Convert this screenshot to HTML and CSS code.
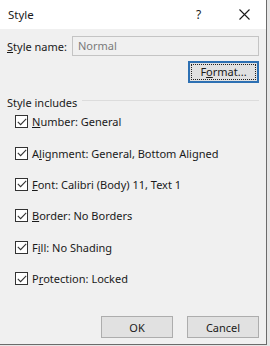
FILE: index.html
```html
<!doctype html>
<html lang="en">
<head>
    <meta charset="UTF-8">
    <title>Style</title>
    <link rel="stylesheet" href="styles.css">
</head>
<body>
<div class="dialog">
    <div class="titlebar">
        <span class="title">Style</span>
        <span class="help">?</span>
        <span class="close">
            <svg width="11" height="11" viewBox="0 0 11 11"><path d="M0.5 0.5 L10.5 10.5 M10.5 0.5 L0.5 10.5" stroke="#1a1a1a" stroke-width="1.1" fill="none"/></svg>
        </span>
    </div>

    <div class="content">
        <div class="name_row">
            <span class="label"><u>S</u>tyle name:</span>
            <div class="name_input">Normal</div>
        </div>

        <div class="format_row">
            <button class="btn btn_focus"><span class="focus_rect">F<u>o</u>rmat...</span></button>
        </div>

        <div class="group_head">
            <span>Style includes</span>
            <span class="group_line"></span>
        </div>

        <ul class="checks">
            <li><span class="box"><svg width="10" height="8" viewBox="0 0 10 8"><path d="M0.8 3.8 L3.6 6.6 L9.2 0.8" stroke="#333" stroke-width="1.1" fill="none"/></svg></span><u>N</u>umber: General</li>
            <li><span class="box"><svg width="10" height="8" viewBox="0 0 10 8"><path d="M0.8 3.8 L3.6 6.6 L9.2 0.8" stroke="#333" stroke-width="1.1" fill="none"/></svg></span>A<u>l</u>ignment: General, Bottom Aligned</li>
            <li><span class="box"><svg width="10" height="8" viewBox="0 0 10 8"><path d="M0.8 3.8 L3.6 6.6 L9.2 0.8" stroke="#333" stroke-width="1.1" fill="none"/></svg></span><u>F</u>ont: Calibri (Body) 11, Text 1</li>
            <li><span class="box"><svg width="10" height="8" viewBox="0 0 10 8"><path d="M0.8 3.8 L3.6 6.6 L9.2 0.8" stroke="#333" stroke-width="1.1" fill="none"/></svg></span><u>B</u>order: No Borders</li>
            <li><span class="box"><svg width="10" height="8" viewBox="0 0 10 8"><path d="M0.8 3.8 L3.6 6.6 L9.2 0.8" stroke="#333" stroke-width="1.1" fill="none"/></svg></span>F<u>i</u>ll: No Shading</li>
            <li><span class="box"><svg width="10" height="8" viewBox="0 0 10 8"><path d="M0.8 3.8 L3.6 6.6 L9.2 0.8" stroke="#333" stroke-width="1.1" fill="none"/></svg></span>P<u>r</u>otection: Locked</li>
        </ul>

        <div class="buttons">
            <button class="btn">OK</button>
            <button class="btn">Cancel</button>
        </div>
    </div>
</div>
</body>
</html>
```

FILE: styles.css
```css
body {
    margin: 0;
    background-color: #e6e6e6;
    font-family: "Noto Sans", "Open Sans", sans-serif;
    font-size: 11px;
    color: #1a1a1a;
}

.dialog {
    width: 266px;
    height: 344px;
    background-color: #f0f0f0;
    border-right: 1px solid #6b6b6b;
    border-bottom: 1px solid #6b6b6b;
    display: flex;
    flex-direction: column;
}

.titlebar {
    height: 29px;
    background-color: #fff;
    display: flex;
    align-items: center;
    padding-left: 8px;
}

.title {
    flex: 1;
    font-size: 11.5px;
}

.help {
    width: 43px;
    padding-left: 3px;
    font-size: 12px;
}

.close {
    width: 27px;
    display: flex;
    align-items: center;
}

.content {
    padding: 7px 7px 0 7px;
    display: flex;
    flex-direction: column;
}

.name_row {
    display: flex;
    align-items: center;
    height: 20px;
}

.label {
    width: 65px;
}

.name_input {
    flex: 1;
    height: 18px;
    line-height: 18px;
    border: 1px solid #c4c4c4;
    background-color: #f0f0f0;
    color: #7a7a7a;
    padding-left: 5px;
}

.format_row {
    display: flex;
    justify-content: flex-end;
    margin-top: 5px;
}

.btn {
    font-family: inherit;
    font-size: 11px;
    color: #1a1a1a;
    background-color: #e1e1e1;
    border: 1px solid #adadad;
    width: 72px;
    height: 22px;
    padding: 0;
}

.btn_focus {
    border: 2px solid #2d70b3;
    width: 71px;
    height: 22px;
    padding: 1px;
}

.focus_rect {
    display: block;
    height: 100%;
    box-sizing: border-box;
    border: 1px dotted #222;
    line-height: 14px;
}

.group_head {
    display: flex;
    align-items: center;
    margin-top: 10px;
    height: 18px;
}

.group_line {
    flex: 1;
    height: 1px;
    background-color: #dcdcdc;
    margin-left: 5px;
    margin-top: -3px;
}

.checks {
    list-style: none;
    margin: -5px 0 0 0;
    padding: 0 0 0 8px;
}

.checks li {
    height: 31.4px;
    display: flex;
    align-items: center;
}

.box {
    width: 11px;
    height: 11px;
    border: 1px solid #333;
    background-color: #fff;
    margin-right: 4px;
    display: flex;
    align-items: center;
    justify-content: center;
}

.buttons {
    display: flex;
    justify-content: flex-end;
    gap: 14px;
    margin-top: 22px;
}
```
